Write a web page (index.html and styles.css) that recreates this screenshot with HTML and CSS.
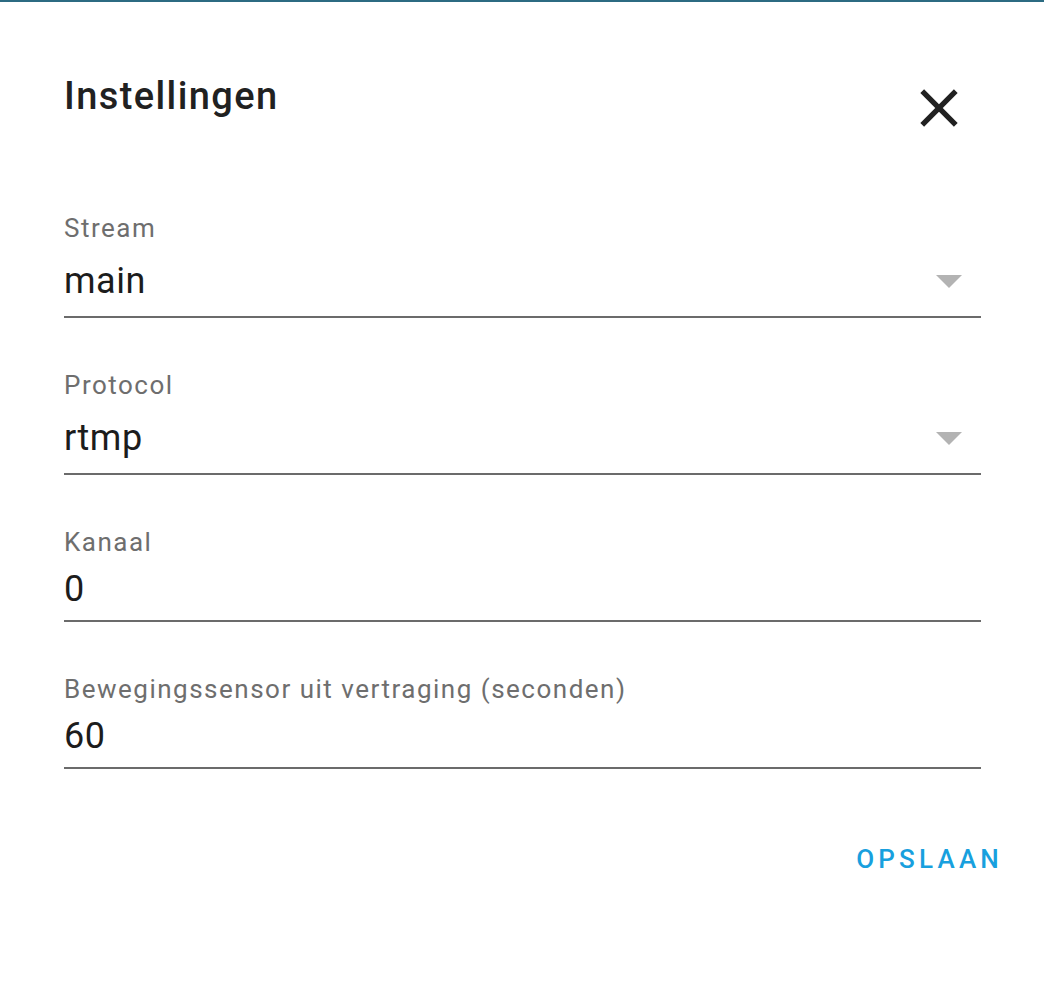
FILE: index.html
```html
<!DOCTYPE html>
<html lang="nl">
<head>
<meta charset="utf-8">
<title>Instellingen</title>
<link rel="stylesheet" href="styles.css">
</head>
<body>
<div class="topline"></div>
<div class="dialog">
  <div class="header">
    <h2 class="title">Instellingen</h2>
    <button class="close" aria-label="Sluiten">
      <svg viewBox="0 0 24 24" width="64" height="64"><path d="M19,6.41L17.59,5L12,10.59L6.41,5L5,6.41L10.59,12L5,17.59L6.41,19L12,13.41L17.59,19L19,17.59L13.41,12L19,6.41Z" fill="#212121"/></svg>
    </button>
  </div>
  <div class="content">
    <div class="field select">
      <div class="label">Stream</div>
      <div class="value-row"><span class="value">main</span><span class="arrow"></span></div>
    </div>
    <div class="field select">
      <div class="label">Protocol</div>
      <div class="value-row"><span class="value">rtmp</span><span class="arrow"></span></div>
    </div>
    <div class="field text">
      <div class="label">Kanaal</div>
      <div class="value-row"><span class="value">0</span></div>
    </div>
    <div class="field text">
      <div class="label">Bewegingssensor uit vertraging (seconden)</div>
      <div class="value-row"><span class="value">60</span></div>
    </div>
  </div>
  <div class="actions">
    <button class="save">OPSLAAN</button>
  </div>
</div>
</body>
</html>
```
FILE: styles.css
```css
html, body {
  margin: 0;
  padding: 0;
  background: #ffffff;
  font-family: Roboto, "Noto Sans", sans-serif;
}
.topline {
  height: 2px;
  background: #2c6b82;
}
.dialog {
  padding: 0 63px 0 64px;
}
.header {
  display: flex;
  justify-content: space-between;
  align-items: flex-start;
  height: 159px;
}
.title {
  margin: 0;
  padding-top: 70px;
  font-size: 38px;
  line-height: 48px;
  font-weight: 500;
  color: #212121;
  letter-spacing: 1.4px;
}
.close {
  margin: 74px 10px 0 0;
  padding: 0;
  border: 0;
  background: transparent;
  width: 64px;
  height: 64px;
}
.close svg { display: block; }
.content {
  display: flex;
  flex-direction: column;
}
.field {
  border-bottom: 2px solid #6b6b6b;
  padding-top: 52px;
}
.field.select { padding-bottom: 11px; }
.field.select .value-row { margin-top: 14px; }
.field.text { padding-bottom: 7px; }
.field.text .value-row { margin-top: 8px; }
.label {
  font-size: 26px;
  line-height: 30px;
  color: #6e6e6e;
  letter-spacing: 1.5px;
}
.value-row {
  display: flex;
  justify-content: space-between;
  align-items: center;
  height: 48px;
}
.value {
  font-size: 36px;
  line-height: 48px;
  color: #1c1c1c;
  letter-spacing: 0.5px;
}
.arrow {
  width: 0;
  height: 0;
  border-left: 13px solid transparent;
  border-right: 13px solid transparent;
  border-top: 13px solid #b3b3b3;
  margin-right: 19px;
}
.actions {
  display: flex;
  justify-content: flex-end;
  padding-top: 70px;
  margin-right: -22px;
}
.save {
  border: 0;
  background: transparent;
  padding: 0;
  font-family: Roboto, sans-serif;
  font-size: 26px;
  font-weight: 500;
  letter-spacing: 4.2px;
  color: #18a0de;
  line-height: 40px;
}
```
